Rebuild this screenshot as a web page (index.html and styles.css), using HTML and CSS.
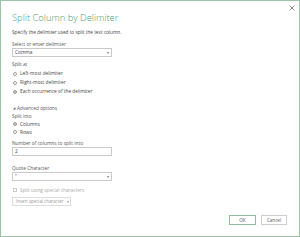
FILE: index.html
```html
<!DOCTYPE html>
<html>
<head>
<meta charset="utf-8">
<link rel="stylesheet" href="styles.css">
</head>
<body>
<div class="dialog">
  <svg class="close" width="6" height="6" viewBox="0 0 6 6"><path d="M0.5 0.5L5.5 5.5M5.5 0.5L0.5 5.5" stroke="#8a8a8a" stroke-width="1"/></svg>
  <div class="title">Split Column by Delimiter</div>
  <div class="subtitle">Specify the delimiter used to split the text column.</div>
  <div class="label mt4">Select or enter delimiter</div>
  <div class="select"><span>Comma</span><span class="arrow">▾</span></div>
  <div class="label mt3">Split at</div>
  <div class="radios mt1">
    <div class="radio"><span class="dot"></span>Left-most delimiter</div>
    <div class="radio"><span class="dot"></span>Right-most delimiter</div>
    <div class="radio"><span class="dot on"></span>Each occurrence of the delimiter</div>
  </div>
  <div class="label adv"><span class="tri">◢</span>Advanced options</div>
  <div class="label">Split into</div>
  <div class="radio small"><span class="dot on"></span>Columns</div>
  <div class="radio small"><span class="dot"></span>Rows</div>
  <div class="label mt3">Number of columns to split into</div>
  <div class="select"><span>2</span></div>
  <div class="label mt8">Quote Character</div>
  <div class="select"><span>"</span><span class="arrow">▾</span></div>
  <div class="check"><span class="box"></span>Split using special characters</div>
  <div class="insert">Insert special character <span class="arrow2">▾</span></div>
  <div class="footer">
    <div class="btn ok">OK</div>
    <div class="btn">Cancel</div>
  </div>
</div>
</body>
</html>
```
FILE: styles.css
```css
html, body { margin: 0; padding: 0; background: #fff; }
.dialog {
  box-sizing: border-box;
  width: 300px;
  height: 237px;
  border: 1px solid #9cc5a8;
  padding: 0 12px 0 11px;
  position: relative;
  font-family: "Open Sans", "Noto Sans", sans-serif;
  font-size: 4.8px;
  color: #444;
  display: flex;
  flex-direction: column;
}
.close { position: absolute; top: 4px; right: 4px; }
.title {
  margin-top: 10px;
  height: 13px;
  line-height: 13px;
  font-size: 9.4px;
  font-weight: 300;
  color: #4f9a6c;
  white-space: nowrap;
}
.subtitle { margin-top: 4px; height: 8px; line-height: 8px; font-size: 4.7px; color: #444; white-space: nowrap; }
.label { height: 8px; line-height: 8px; white-space: nowrap; color: #555; }
.mt1 { margin-top: 1px; }
.mt3 { margin-top: 3px; }
.mt4 { margin-top: 4px; }
.mt8 { margin-top: 8px; }
.select {
  box-sizing: border-box;
  width: 100px;
  height: 9px;
  border: 1px solid #c9c9c9;
  display: flex;
  align-items: center;
  justify-content: space-between;
  padding: 0 2px 0 2px;
  line-height: 7px;
  color: #444;
}
.arrow { font-size: 4px; color: #777; }
.radios { display: flex; flex-direction: column; }
.radio { height: 9px; line-height: 9px; display: flex; align-items: center; white-space: nowrap; }
.radio.small { height: 8px; line-height: 8px; }
.dot {
  box-sizing: border-box;
  width: 4px; height: 4px;
  border: 1px solid #a0a0a0;
  border-radius: 50%;
  margin: 0 3px 0 1px;
  background: #fff;
}
.dot.on { background: #777; box-shadow: inset 0 0 0 0.5px #fff; }
.adv { margin-top: 8px; display: flex; align-items: center; }
.tri { font-size: 3px; margin: 0 2px 0 1px; color: #555; }
.check { margin-top: 5px; height: 8px; line-height: 8px; display: flex; align-items: center; color: #aaa; white-space: nowrap; }
.box { box-sizing: border-box; width: 4px; height: 4px; border: 1px solid #ccc; margin: 0 3px 0 1px; }
.insert {
  margin-top: 3px;
  box-sizing: border-box;
  width: 59px;
  height: 9px;
  border: 1px solid #ddd;
  line-height: 7px;
  padding-left: 3px;
  color: #999;
  white-space: nowrap;
  font-size: 4.4px;
}
.arrow2 { font-size: 3.5px; margin-left: 2px; }
.footer { margin-top: 9px; display: flex; justify-content: flex-end; gap: 5px; }
.btn {
  box-sizing: border-box;
  width: 26px;
  height: 10px;
  border: 1px solid #cdcdcd;
  text-align: center;
  line-height: 8px;
  font-size: 4.6px;
  color: #555;
}
.btn.ok { width: 27px; border-color: #8fbd9c; }
```
